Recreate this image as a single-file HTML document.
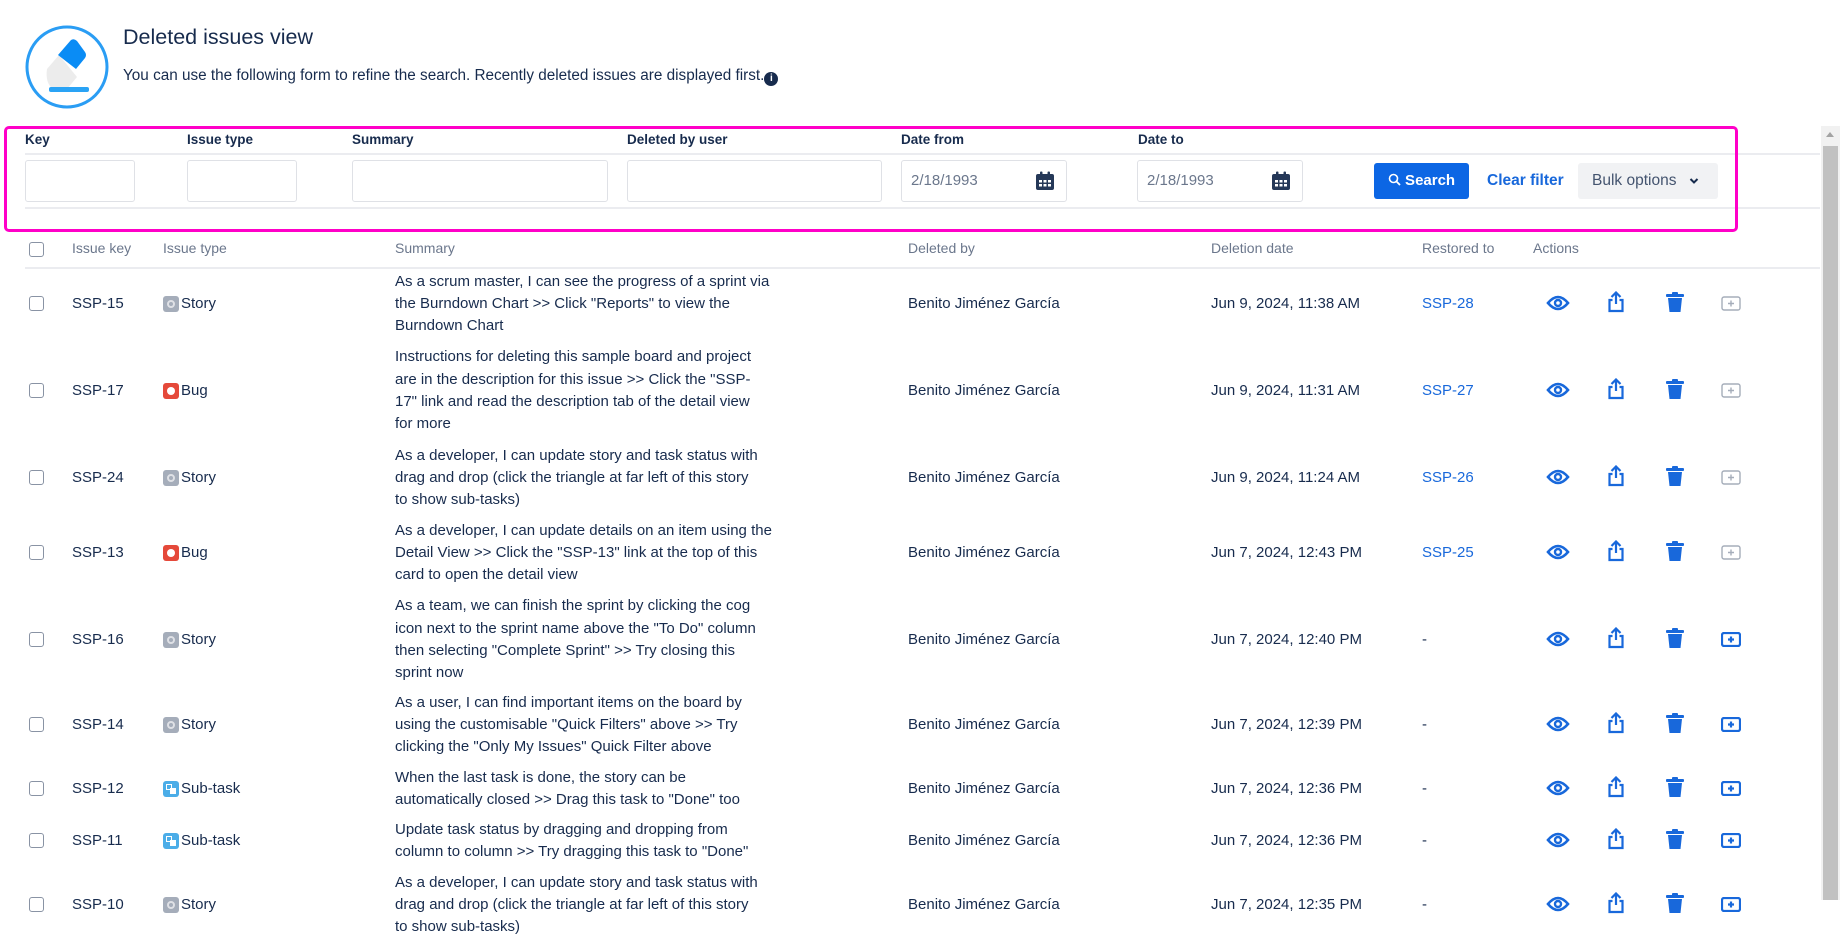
<!DOCTYPE html>
<html><head><meta charset="utf-8"><style>
*{margin:0;padding:0;box-sizing:border-box}
body{width:1840px;height:900px;overflow:hidden;background:#fff;font-family:"Liberation Sans",sans-serif;color:#172b4d;position:relative}
.a{position:absolute;white-space:nowrap}
.lbl{font-weight:bold;font-size:13.5px;top:132px}
.inp{position:absolute;top:160px;height:42px;border:1.5px solid #dfe1e6;border-radius:3px;background:#fff}
.hd{position:absolute;top:240px;font-size:14px;color:#6b778c}
.cb{position:absolute;width:15px;height:15px;border:1.5px solid #8993a4;border-radius:3px;left:29px}
.t{font-size:15px}
.sum{position:absolute;left:395px;font-size:15px;line-height:22.3px;white-space:nowrap}
.ic{position:absolute;width:16px;height:16px;border-radius:3px;left:163px}
.lnk{color:#1868db}
</style></head><body>
<svg class="a" style="left:25px;top:25px" width="84" height="84" viewBox="0 0 84 84">
<circle cx="42" cy="42" r="40" fill="#fff" stroke="#2a9df4" stroke-width="3"/>
<path d="M22 44 L34 30 L52 52 L42 64 L28 64 Q20 58 22 44Z" fill="#ececec"/>
<path d="M33 30 L46 15 Q49 13 52 16 L60 27 Q62 30 60 33 L51 44 Z" fill="#0a8cf5"/>
<rect x="24" y="62" width="40" height="5" rx="2" fill="#2aa3f5"/>
</svg>
<div class="a" style="left:123px;top:25px;font-size:21.5px;color:#172b4d">Deleted issues view</div>
<div class="a" style="left:123px;top:67px;font-size:15.3px">You can use the following form to refine the search. Recently deleted issues are displayed first.<span style="display:inline-block;width:14px;height:14px;border-radius:50%;background:#172b4d;color:#fff;font-size:10px;text-align:center;line-height:14px;font-weight:bold;vertical-align:-1px">i</span></div>

<div class="a" style="left:25px;top:153px;width:1795px;height:2px;background:#ebecf0"></div>
<div class="a" style="left:25px;top:207px;width:1795px;height:2px;background:#ebecf0"></div>
<div class="a" style="left:4px;top:126px;width:1734px;height:106px;border:3px solid #ff00c8;border-radius:5px"></div>

<div class="a lbl" style="left:25px">Key</div>
<div class="a lbl" style="left:187px">Issue type</div>
<div class="a lbl" style="left:352px">Summary</div>
<div class="a lbl" style="left:627px">Deleted by user</div>
<div class="a lbl" style="left:901px">Date from</div>
<div class="a lbl" style="left:1138px">Date to</div>
<div class="inp" style="left:25px;width:110px"></div>
<div class="inp" style="left:187px;width:110px"></div>
<div class="inp" style="left:352px;width:256px"></div>
<div class="inp" style="left:627px;width:255px"></div>
<div class="inp" style="left:901px;width:166px"><span class="a" style="left:9px;top:11px;font-size:15px;color:#6b778c">2/18/1993</span>
<svg class="a" style="left:133px;top:10px" width="20" height="20" viewBox="0 0 20 20"><rect x="1" y="3" width="18" height="16" rx="2" fill="#253858"/><rect x="5" y="0.5" width="2.5" height="5" rx="1" fill="#253858"/><rect x="12.5" y="0.5" width="2.5" height="5" rx="1" fill="#253858"/><g fill="#fff"><rect x="4" y="9" width="3" height="2.5"/><rect x="8.5" y="9" width="3" height="2.5"/><rect x="13" y="9" width="3" height="2.5"/><rect x="4" y="13" width="3" height="2.5"/><rect x="8.5" y="13" width="3" height="2.5"/><rect x="13" y="13" width="3" height="2.5"/></g></svg></div>
<div class="inp" style="left:1137px;width:166px"><span class="a" style="left:9px;top:11px;font-size:15px;color:#6b778c">2/18/1993</span>
<svg class="a" style="left:133px;top:10px" width="20" height="20" viewBox="0 0 20 20"><rect x="1" y="3" width="18" height="16" rx="2" fill="#253858"/><rect x="5" y="0.5" width="2.5" height="5" rx="1" fill="#253858"/><rect x="12.5" y="0.5" width="2.5" height="5" rx="1" fill="#253858"/><g fill="#fff"><rect x="4" y="9" width="3" height="2.5"/><rect x="8.5" y="9" width="3" height="2.5"/><rect x="13" y="9" width="3" height="2.5"/><rect x="4" y="13" width="3" height="2.5"/><rect x="8.5" y="13" width="3" height="2.5"/><rect x="13" y="13" width="3" height="2.5"/></g></svg></div>
<div class="a" style="left:1374px;top:163px;width:95px;height:36px;background:#0c66e4;border-radius:3px;color:#fff;font-weight:bold;font-size:15px;line-height:36px;text-align:center">
<svg width="13" height="13" viewBox="0 0 13 13" style="vertical-align:-1px"><circle cx="5.5" cy="5.5" r="4" fill="none" stroke="#fff" stroke-width="1.6"/><path d="M8.5 8.5 L12 12" stroke="#fff" stroke-width="1.8"/></svg> Search</div>
<div class="a" style="left:1487px;top:172px;font-size:15.5px;font-weight:bold;color:#1868db">Clear filter</div>
<div class="a" style="left:1578px;top:163px;width:140px;height:36px;background:#f1f2f4;border-radius:3px;font-size:15.5px;line-height:36px;padding-left:14px;color:#44546f">Bulk options <svg width="10" height="8" viewBox="0 0 10 8" style="margin-left:8px"><path d="M1.5 2 L5 5.5 L8.5 2" fill="none" stroke="#172b4d" stroke-width="2"/></svg></div>

<div class="a" style="left:1821px;top:126px;width:19px;height:774px;background:#f1f1f1"></div>
<div class="a" style="left:1823px;top:146px;width:15px;height:754px;background:#c1c1c1"></div>
<svg class="a" style="left:1825px;top:131px" width="10" height="8"><path d="M1 6 L5 1 L9 6Z" fill="#a3a3a3"/></svg>

<div class="cb" style="top:242px"></div>
<div class="hd" style="left:72px">Issue key</div>
<div class="hd" style="left:163px">Issue type</div>
<div class="hd" style="left:395px">Summary</div>
<div class="hd" style="left:908px">Deleted by</div>
<div class="hd" style="left:1211px">Deletion date</div>
<div class="hd" style="left:1422px">Restored to</div>
<div class="hd" style="left:1533px">Actions</div>
<div class="a" style="left:25px;top:267px;width:1795px;height:1.5px;background:#ebecf0"></div>

<div id="rows"></div>
<script>
const rows=[
[304,"SSP-15","s",["As a scrum master, I can see the progress of a sprint via","the Burndown Chart >> Click \"Reports\" to view the","Burndown Chart"],"Jun 9, 2024, 11:38 AM","SSP-28",0],
[391,"SSP-17","b",["Instructions for deleting this sample board and project","are in the description for this issue >> Click the \"SSP-","17\" link and read the description tab of the detail view","for more"],"Jun 9, 2024, 11:31 AM","SSP-27",0],
[478,"SSP-24","s",["As a developer, I can update story and task status with","drag and drop (click the triangle at far left of this story","to show sub-tasks)"],"Jun 9, 2024, 11:24 AM","SSP-26",0],
[553,"SSP-13","b",["As a developer, I can update details on an item using the","Detail View >> Click the \"SSP-13\" link at the top of this","card to open the detail view"],"Jun 7, 2024, 12:43 PM","SSP-25",0],
[640,"SSP-16","s",["As a team, we can finish the sprint by clicking the cog","icon next to the sprint name above the \"To Do\" column","then selecting \"Complete Sprint\" >> Try closing this","sprint now"],"Jun 7, 2024, 12:40 PM","-",1],
[725,"SSP-14","s",["As a user, I can find important items on the board by","using the customisable \"Quick Filters\" above >> Try","clicking the \"Only My Issues\" Quick Filter above"],"Jun 7, 2024, 12:39 PM","-",1],
[789,"SSP-12","t",["When the last task is done, the story can be","automatically closed >> Drag this task to \"Done\" too"],"Jun 7, 2024, 12:36 PM","-",1],
[841,"SSP-11","t",["Update task status by dragging and dropping from","column to column >> Try dragging this task to \"Done\""],"Jun 7, 2024, 12:36 PM","-",1],
[905,"SSP-10","s",["As a developer, I can update story and task status with","drag and drop (click the triangle at far left of this story","to show sub-tasks)"],"Jun 7, 2024, 12:35 PM","-",1]];
const B="#1868db";
let h="";
for(const [c,k,ty,s,d,r,en] of rows){
 h+=`<div class="cb" style="top:${c-8}px"></div>`;
 h+=`<div class="a t" style="left:72px;top:${c-9}px">${k}</div>`;
 let ic=ty=="s"?`<div class="ic" style="top:${c-8}px;background:#a5adba"><div style="position:absolute;left:4px;top:4px;width:8px;height:8px;border-radius:50%;border:2px solid #dfe1e6"></div></div>`:
 ty=="b"?`<div class="ic" style="top:${c-8}px;background:#e5493a"><div style="position:absolute;left:4px;top:4px;width:8px;height:8px;border-radius:50%;background:#fff"></div></div>`:
 `<div class="ic" style="top:${c-8}px;background:#4bade8"><div style="position:absolute;left:3px;top:3px;width:6px;height:6px;border:1.5px solid #fff"></div><div style="position:absolute;left:7px;top:7px;width:6px;height:6px;background:#fff"></div></div>`;
 h+=ic;
 h+=`<div class="a t" style="left:181px;top:${c-9}px">${ty=="s"?"Story":ty=="b"?"Bug":"Sub-task"}</div>`;
 h+=`<div class="sum" style="top:${c-s.length*22.3/2}px">${s.join("<br>")}</div>`;
 h+=`<div class="a t" style="left:908px;top:${c-9}px">Benito Jiménez García</div>`;
 h+=`<div class="a t" style="left:1211px;top:${c-9}px">${d}</div>`;
 h+=`<div class="a t ${r!="-"?"lnk":""}" style="left:1422px;top:${c-9}px">${r}</div>`;
 h+=`<svg class="a" style="left:1546px;top:${c-10}px" width="24" height="18" viewBox="0 0 24 18"><path d="M2 9 Q12 -3 22 9 Q12 21 2 9Z" fill="none" stroke="${B}" stroke-width="2.6"/><circle cx="12" cy="9" r="3" fill="none" stroke="${B}" stroke-width="2.4"/></svg>`;
 h+=`<svg class="a" style="left:1607px;top:${c-13}px" width="18" height="22" viewBox="0 0 18 22"><path d="M9 2 V13 M4.5 6 L9 1.5 L13.5 6" fill="none" stroke="${B}" stroke-width="2.2"/><path d="M5.5 9 H2.5 V20 H15.5 V9 H12.5" fill="none" stroke="${B}" stroke-width="2.2"/></svg>`;
 h+=`<svg class="a" style="left:1665px;top:${c-12}px" width="20" height="21" viewBox="0 0 20 21"><rect x="1" y="2" width="18" height="3" rx="1" fill="${B}"/><rect x="7" y="0" width="6" height="3" rx="1" fill="${B}"/><path d="M3 6 H17 L15.5 20 H4.5Z" fill="${B}"/></svg>`;
 const g=en?B:"#a5adba";
 h+=`<svg class="a" style="left:1721px;top:${c-8}px" width="20" height="15" viewBox="0 0 20 15"><rect x="1" y="1" width="18" height="13" rx="2" fill="none" stroke="${g}" stroke-width="${en?2.2:1.4}"/><path d="M10 4.5 V10.5 M7 7.5 H13" stroke="${g}" stroke-width="${en?2.2:1.4}"/></svg>`;
}
document.getElementById("rows").innerHTML=h;
</script>
</body></html>
